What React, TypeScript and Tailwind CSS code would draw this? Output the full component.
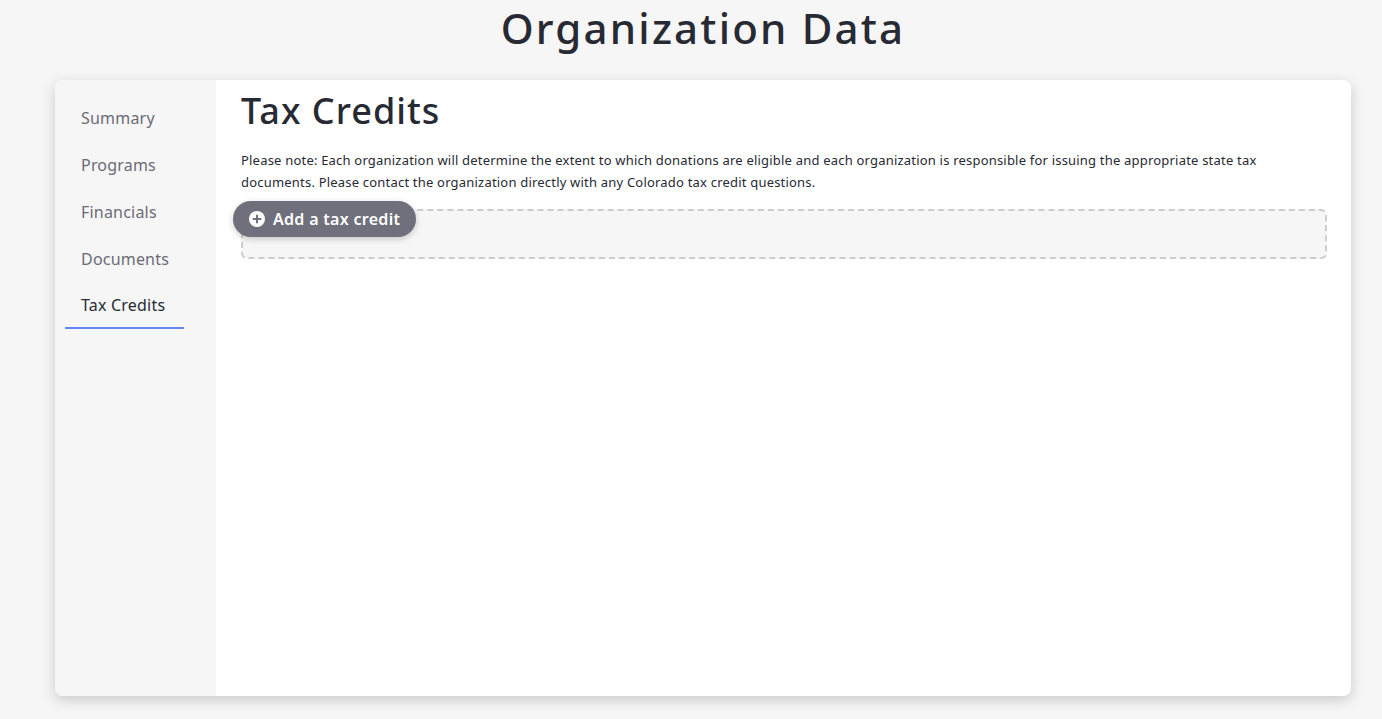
import React from "react";

const font = { fontFamily: '"Noto Sans", "Open Sans", sans-serif' };

function PlusCircle() {
  return (
    <svg width="16" height="16" viewBox="0 0 16 16" aria-hidden>
      <circle cx="8" cy="8" r="8" fill="#ffffff" />
      <path d="M8 4.5v7M4.5 8h7" stroke="#6f707c" strokeWidth="2" strokeLinecap="round" />
    </svg>
  );
}

export default function App() {
  const nav = ["Summary", "Programs", "Financials", "Documents", "Tax Credits"];
  return (
    <div className="min-h-[719px] w-full bg-[#f6f6f6] pl-[55px]" style={font}>
      <div className="w-[1296px] flex flex-col">
        <h1 className="text-center text-[42px] leading-[56px] font-medium text-[#272a33] tracking-[2.2px]">
          Organization Data
        </h1>
        <div className="mt-[24px] w-[1296px] h-[616px] flex rounded-lg bg-white shadow-[0_4px_14px_rgba(0,0,0,0.18)] overflow-hidden">
          <aside className="w-[161px] shrink-0 bg-[#f6f6f6] pt-[14px] px-[10px]">
            {nav.map((n) => {
              const active = n === "Tax Credits";
              return (
                <div
                  key={n}
                  className={
                    "h-[47px] flex items-center px-[16px] text-[16px] tracking-[0.2px] " +
                    (active ? "text-[#272a33] border-b-2 border-[#6287f6] w-[119px]" : "text-[#6b6b76]")
                  }
                >
                  {n}
                </div>
              );
            })}
          </aside>
          <main className="flex-1 pl-[25px] pr-[24px] pt-[7px]">
            <h2 className="text-[36px] leading-[48px] font-medium text-[#272a33] tracking-[1px]">Tax Credits</h2>
            <p className="mt-[14px] text-[13px] leading-[22px] text-[#272a33] tracking-[0.2px]">
              Please note: Each organization will determine the extent to which donations are eligible and each
              organization is responsible for issuing the appropriate state tax documents. Please contact the
              organization directly with any Colorado tax credit questions.
            </p>
            <div className="relative mt-[16px] h-[50px] rounded-md border-2 border-dashed border-[#cccccc] bg-[#f6f6f6]">
              <button className="absolute left-[-10px] top-[-10px] h-[36px] px-[16px] rounded-full bg-[#6f707c] text-white text-[16px] font-semibold tracking-[0.3px] flex items-center gap-[8px] shadow-[0_2px_6px_rgba(0,0,0,0.2)]">
                <PlusCircle />
                Add a tax credit
              </button>
            </div>
          </main>
        </div>
      </div>
    </div>
  );
}
